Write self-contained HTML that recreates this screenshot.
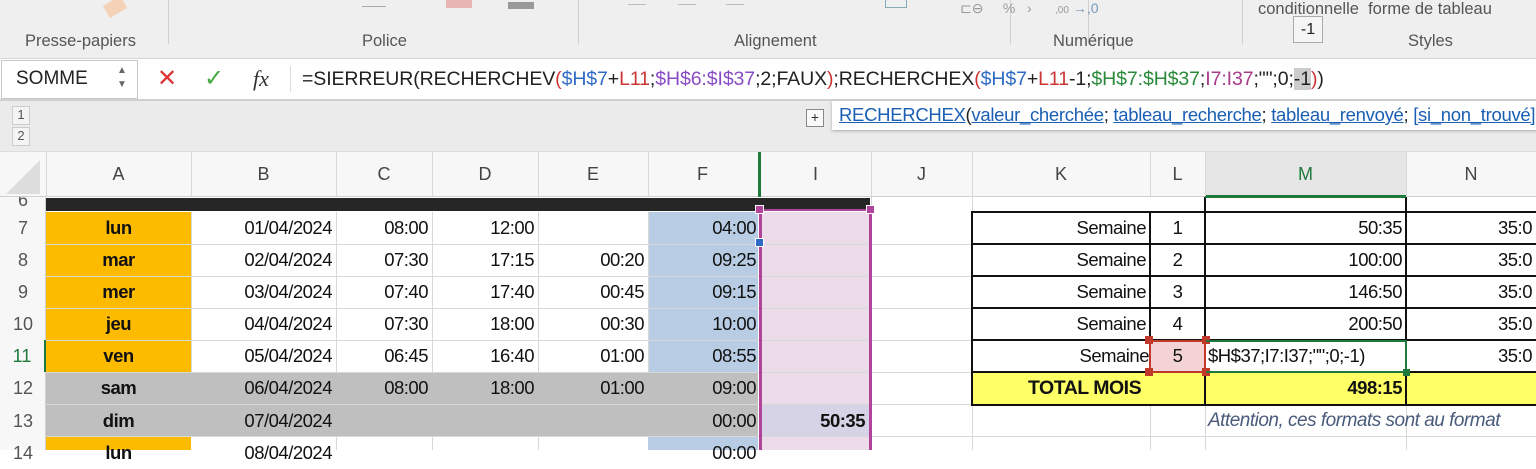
<!DOCTYPE html>
<html><head><meta charset="utf-8"><style>
*{margin:0;padding:0;box-sizing:border-box}
body{width:1536px;height:450px;overflow:hidden;background:#fff;position:relative;font-family:"Liberation Sans",sans-serif}
.a{position:absolute}
.c{position:absolute;font-size:18.5px;line-height:32px;white-space:nowrap;color:#111;letter-spacing:-0.5px}
.r{text-align:right;padding-right:4px}
.m{text-align:center}
.b{font-weight:bold}
.hl{position:absolute;height:1px;background:#d8d8d8}
.vl{position:absolute;width:1px;background:#d8d8d8}
.ch{position:absolute;top:152px;height:45px;line-height:45px;text-align:center;font-size:18px;color:#444}
.rh{position:absolute;left:0;width:46px;text-align:center;font-size:18px;color:#555;line-height:32px}
</style></head><body>
<!-- ribbon -->
<div class="a" style="left:0;top:0;width:1536px;height:58px;background:#efefef"></div>
<div class="a" style="left:168px;top:0;width:1px;height:44px;background:#d0d0d0"></div>
<div class="a" style="left:578px;top:0;width:1px;height:44px;background:#d0d0d0"></div>
<div class="a" style="left:1010px;top:0;width:1px;height:44px;background:#d0d0d0"></div>
<div class="a" style="left:1088px;top:0;width:1px;height:44px;background:#d0d0d0"></div>
<div class="a" style="left:1242px;top:0;width:1px;height:44px;background:#d0d0d0"></div>
<div class="a" style="left:105px;top:0;width:20px;height:14px;background:#f3d2b8;transform:rotate(-30deg)"></div>
<div class="a" style="left:446px;top:0;width:26px;height:8px;background:#e8b4b4"></div>
<div class="a" style="left:508px;top:2px;width:26px;height:7px;background:#999"></div>
<div class="a" style="left:362px;top:6px;width:24px;height:1px;background:#aaa"></div>
<div class="a" style="left:628px;top:4px;width:18px;height:1px;background:#bbb"></div>
<div class="a" style="left:678px;top:4px;width:18px;height:1px;background:#bbb"></div>
<div class="a" style="left:726px;top:4px;width:18px;height:1px;background:#bbb"></div>
<div class="a" style="left:885px;top:0;width:22px;height:8px;border:1px solid #8ab;border-top:none"></div>
<div class="a" style="left:960px;top:0;font-size:14px;color:#999">⊏⊖&nbsp;&nbsp;&nbsp;&nbsp;&nbsp;%&nbsp;&nbsp;&nbsp;›&nbsp;&nbsp;&nbsp;&nbsp;&nbsp;&nbsp;<span style="font-size:10px">,00</span> <span style="color:#79b">→,0</span></div>
<div class="a" style="left:1258px;top:0;font-size:16.5px;color:#555;line-height:18px">conditionnelle&nbsp;&nbsp;forme de tableau</div>
<div class="a" style="left:25px;top:32px;font-size:16.5px;color:#555">Presse-papiers</div>
<div class="a" style="left:362px;top:32px;font-size:16.5px;color:#555">Police</div>
<div class="a" style="left:734px;top:32px;font-size:16.5px;color:#555">Alignement</div>
<div class="a" style="left:1053px;top:32px;font-size:16.5px;color:#555">Numérique</div>
<div class="a" style="left:1408px;top:32px;font-size:16.5px;color:#555">Styles</div>
<div class="a" style="left:1293px;top:16px;width:30px;height:27px;border:1px solid #aaa;background:#f5f5f5;font-size:16px;line-height:25px;text-align:center;color:#222">-1</div>
<!-- formula bar -->
<div class="a" style="left:0;top:58px;width:1536px;height:43px;background:#fff;border-top:1px solid #d4d4d4;border-bottom:2px solid #d0d0d0"></div>
<div class="a" style="left:1px;top:60px;width:137px;height:39px;border:1px solid #c8c8c8;background:#fff"></div>
<div class="a" style="left:16px;top:64px;font-size:19px;line-height:30px;color:#222">SOMME</div>
<div class="a" style="left:117px;top:64px;font-size:10px;line-height:14px;color:#666">▲<br>▼</div>
<div class="a" style="left:157px;top:63px;font-size:24px;color:#d33;line-height:32px">✕</div>
<div class="a" style="left:204px;top:63px;font-size:24px;color:#4a4;line-height:32px">✓</div>
<div class="a" style="left:253px;top:63px;font-size:22px;font-family:'Liberation Serif',serif;font-style:italic;color:#333;line-height:32px">fx</div>
<div class="a" style="left:290px;top:66px;width:1px;height:26px;background:#ddd"></div>
<div class="a" style="left:302px;top:64px;font-size:19.5px;line-height:30px;color:#222;white-space:nowrap;letter-spacing:-0.1px">=SIERREUR(RECHERCHEV<span style="color:#c33">(</span><span style="color:#2f6bc4">$H$7</span>+<span style="color:#c33">L11</span>;<span style="color:#8a4cc4">$H$6:$I$37</span>;2;FAUX<span style="color:#c33">)</span>;RECHERCHEX<span style="color:#c33">(</span><span style="color:#2f6bc4">$H$7</span>+<span style="color:#c33">L11</span>-1;<span style="color:#2a8a3a">$H$7:$H$37</span>;<span style="color:#a83a8a">I7:I37</span>;"";0;<span style="background:#ccc">-1</span><span style="color:#c33">)</span>)</div>
<!-- outline area -->
<div class="a" style="left:0;top:101px;width:1536px;height:51px;background:#ebebeb"></div>
<div class="a" style="left:12px;top:106px;width:18px;height:19px;border:1px solid #ccc;background:#f4f4f4;font-size:13px;text-align:center;color:#555">1</div>
<div class="a" style="left:12px;top:127px;width:18px;height:19px;border:1px solid #ccc;background:#f4f4f4;font-size:13px;text-align:center;color:#555">2</div>
<div class="a" style="left:806px;top:109px;width:18px;height:18px;border:1px solid #888;background:#fafafa;font-size:14px;line-height:15px;text-align:center;color:#333">+</div>
<div class="a" style="left:832px;top:101px;width:710px;height:29px;background:#fff;box-shadow:0 1px 3px #aaa"></div>
<div class="a" style="left:839px;top:102px;font-size:18.5px;line-height:26px;color:#1a5fb4;white-space:nowrap;letter-spacing:-0.3px"><u>RECHERCHEX</u><span style="color:#222">(</span><u>valeur_cherchée</u><span style="color:#222">; </span><u>tableau_recherche</u><span style="color:#222">; </span><u>tableau_renvoyé</u><span style="color:#222">; </span><u>[si_non_trouvé]</u></div>
<!-- column headers -->
<div class="a" style="left:0;top:151px;width:1536px;height:46px;background:#f7f7f7;border-top:1px solid #ddd;border-bottom:1px solid #d0d0d0"></div>
<div class="a" style="left:6px;top:160px;width:0;height:0;border-left:34px solid transparent;border-bottom:34px solid #ddd"></div>
<div class="ch" style="left:46px;width:145px">A</div>
<div class="ch" style="left:191px;width:145px">B</div>
<div class="ch" style="left:336px;width:96px">C</div>
<div class="ch" style="left:432px;width:106px">D</div>
<div class="ch" style="left:538px;width:110px">E</div>
<div class="ch" style="left:648px;width:109px">F</div>
<div class="ch" style="left:760px;width:111px">I</div>
<div class="ch" style="left:871px;width:101px">J</div>
<div class="ch" style="left:972px;width:178px">K</div>
<div class="ch" style="left:1150px;width:55px">L</div>
<div class="ch" style="left:1205px;width:201px;color:#1e7a3c;background:#e6e6e6">M</div>
<div class="a" style="left:1205px;top:195px;width:201px;height:2px;background:#1e7a3c"></div>
<div class="ch" style="left:1406px;width:130px">N</div>
<div class="vl" style="left:46px;top:152px;height:45px"></div>
<div class="vl" style="left:191px;top:152px;height:45px"></div>
<div class="vl" style="left:336px;top:152px;height:45px"></div>
<div class="vl" style="left:432px;top:152px;height:45px"></div>
<div class="vl" style="left:538px;top:152px;height:45px"></div>
<div class="vl" style="left:648px;top:152px;height:45px"></div>
<div class="vl" style="left:871px;top:152px;height:45px"></div>
<div class="vl" style="left:972px;top:152px;height:45px"></div>
<div class="vl" style="left:1150px;top:152px;height:45px"></div>
<div class="vl" style="left:1205px;top:152px;height:45px"></div>
<div class="vl" style="left:1406px;top:152px;height:45px"></div>
<div class="a" style="left:758px;top:152px;width:3px;height:45px;background:#1e7a3c"></div>
<!-- grid area -->
<div class="a" style="left:0;top:197px;width:46px;height:253px;background:#f7f7f7;border-right:1px solid #d0d0d0"></div>
<div class="rh" style="top:197px;height:14px;overflow:hidden;line-height:6px">6</div>
<div class="rh" style="top:212px">7</div>
<div class="rh" style="top:244px">8</div>
<div class="rh" style="top:276px">9</div>
<div class="rh" style="top:308px">10</div>
<div class="rh" style="top:340px;color:#1e7a3c;border-right:2px solid #1e7a3c">11</div>
<div class="rh" style="top:372px">12</div>
<div class="rh" style="top:405px">13</div>
<div class="rh" style="top:437px">14</div>
<!-- row 6 dark bar -->
<div class="a" style="left:46px;top:198px;width:824px;height:13px;background:#262626"></div>
<!-- backgrounds -->
<div class="a" style="left:46px;top:212px;width:145px;height:160px;background:#fdbb00"></div>
<div class="a" style="left:46px;top:437px;width:145px;height:13px;background:#fdbb00"></div>
<div class="a" style="left:648px;top:212px;width:110px;height:160px;background:#b8cce4"></div>
<div class="a" style="left:648px;top:437px;width:110px;height:13px;background:#b8cce4"></div>
<div class="a" style="left:46px;top:372px;width:712px;height:65px;background:#bfbfbf"></div>
<div class="a" style="left:762px;top:212px;width:108px;height:238px;background:#ecdbe9"></div>
<div class="a" style="left:762px;top:405px;width:108px;height:32px;background:#d6d3e6"></div>
<!-- grid lines -->
<div class="hl" style="left:46px;top:244px;width:1490px"></div>
<div class="hl" style="left:46px;top:276px;width:1490px"></div>
<div class="hl" style="left:46px;top:308px;width:1490px"></div>
<div class="hl" style="left:46px;top:340px;width:1490px"></div>
<div class="hl" style="left:46px;top:372px;width:1490px"></div>
<div class="hl" style="left:46px;top:404px;width:1490px"></div>
<div class="hl" style="left:46px;top:436px;width:1490px"></div>
<div class="vl" style="left:336px;top:212px;height:160px"></div>
<div class="vl" style="left:432px;top:212px;height:160px"></div>
<div class="vl" style="left:538px;top:212px;height:160px"></div>
<div class="vl" style="left:648px;top:212px;height:160px"></div>
<div class="vl" style="left:191px;top:212px;height:160px"></div>
<div class="vl" style="left:336px;top:437px;height:13px"></div>
<div class="vl" style="left:432px;top:437px;height:13px"></div>
<div class="vl" style="left:538px;top:437px;height:13px"></div>
<div class="vl" style="left:871px;top:197px;height:253px"></div>
<div class="vl" style="left:972px;top:197px;height:253px"></div>
<div class="vl" style="left:1150px;top:405px;height:45px"></div>
<div class="vl" style="left:1205px;top:197px;height:253px"></div>
<div class="vl" style="left:1406px;top:197px;height:253px"></div>
<!-- I col selection border -->
<div class="a" style="left:759px;top:208px;width:3px;height:242px;background:#b0449a"></div>
<div class="a" style="left:869px;top:208px;width:3px;height:242px;background:#b0449a"></div>
<div class="a" style="left:759px;top:209px;width:113px;height:2px;background:#b0449a"></div>
<div class="a" style="left:755px;top:205px;width:9px;height:9px;background:#b0449a;border:1px solid #fff"></div>
<div class="a" style="left:866px;top:205px;width:9px;height:9px;background:#b0449a;border:1px solid #fff"></div>
<div class="a" style="left:755px;top:238px;width:9px;height:9px;background:#2f6bc4;border:1px solid #fff"></div>
<!-- data cells -->
<div class="c b m" style="left:46px;top:212px;width:145px">lun</div>
<div class="c b m" style="left:46px;top:244px;width:145px">mar</div>
<div class="c b m" style="left:46px;top:276px;width:145px">mer</div>
<div class="c b m" style="left:46px;top:308px;width:145px">jeu</div>
<div class="c b m" style="left:46px;top:340px;width:145px">ven</div>
<div class="c b m" style="left:46px;top:372px;width:145px">sam</div>
<div class="c b m" style="left:46px;top:405px;width:145px">dim</div>
<div class="c b m" style="left:46px;top:437px;width:145px">lun</div>
<div class="c r" style="left:191px;top:212px;width:145px">01/04/2024</div>
<div class="c r" style="left:191px;top:244px;width:145px">02/04/2024</div>
<div class="c r" style="left:191px;top:276px;width:145px">03/04/2024</div>
<div class="c r" style="left:191px;top:308px;width:145px">04/04/2024</div>
<div class="c r" style="left:191px;top:340px;width:145px">05/04/2024</div>
<div class="c r" style="left:191px;top:372px;width:145px">06/04/2024</div>
<div class="c r" style="left:191px;top:405px;width:145px">07/04/2024</div>
<div class="c r" style="left:191px;top:437px;width:145px">08/04/2024</div>
<div class="c r" style="left:336px;top:212px;width:96px">08:00</div>
<div class="c r" style="left:336px;top:244px;width:96px">07:30</div>
<div class="c r" style="left:336px;top:276px;width:96px">07:40</div>
<div class="c r" style="left:336px;top:308px;width:96px">07:30</div>
<div class="c r" style="left:336px;top:340px;width:96px">06:45</div>
<div class="c r" style="left:336px;top:372px;width:96px">08:00</div>
<div class="c r" style="left:432px;top:212px;width:106px">12:00</div>
<div class="c r" style="left:432px;top:244px;width:106px">17:15</div>
<div class="c r" style="left:432px;top:276px;width:106px">17:40</div>
<div class="c r" style="left:432px;top:308px;width:106px">18:00</div>
<div class="c r" style="left:432px;top:340px;width:106px">16:40</div>
<div class="c r" style="left:432px;top:372px;width:106px">18:00</div>
<div class="c r" style="left:538px;top:244px;width:110px">00:20</div>
<div class="c r" style="left:538px;top:276px;width:110px">00:45</div>
<div class="c r" style="left:538px;top:308px;width:110px">00:30</div>
<div class="c r" style="left:538px;top:340px;width:110px">01:00</div>
<div class="c r" style="left:538px;top:372px;width:110px">01:00</div>
<div class="c r" style="left:648px;top:212px;width:110px;padding-right:2px">04:00</div>
<div class="c r" style="left:648px;top:244px;width:110px;padding-right:2px">09:25</div>
<div class="c r" style="left:648px;top:276px;width:110px;padding-right:2px">09:15</div>
<div class="c r" style="left:648px;top:308px;width:110px;padding-right:2px">10:00</div>
<div class="c r" style="left:648px;top:340px;width:110px;padding-right:2px">08:55</div>
<div class="c r" style="left:648px;top:372px;width:110px;padding-right:2px">09:00</div>
<div class="c r" style="left:648px;top:405px;width:110px;padding-right:2px">00:00</div>
<div class="c r" style="left:648px;top:437px;width:110px;padding-right:2px">00:00</div>
<div class="c r b" style="left:760px;top:405px;width:109px">50:35</div>
<!-- right table -->
<div class="a" style="left:972px;top:372px;width:564px;height:33px;background:#ffff66"></div>
<div class="a" style="left:1150px;top:340px;width:55px;height:32px;background:#f3d3d3"></div>
<div class="a" style="left:971px;top:211px;width:2px;height:195px;background:#111"></div>
<div class="a" style="left:1149px;top:211px;width:2px;height:162px;background:#111"></div>
<div class="a" style="left:1204px;top:197px;width:2px;height:209px;background:#111"></div>
<div class="a" style="left:1405px;top:197px;width:2px;height:209px;background:#111"></div>
<div class="a" style="left:971px;top:211px;width:565px;height:2px;background:#111"></div>
<div class="a" style="left:971px;top:243px;width:565px;height:2px;background:#111"></div>
<div class="a" style="left:971px;top:275px;width:565px;height:2px;background:#111"></div>
<div class="a" style="left:971px;top:307px;width:565px;height:2px;background:#111"></div>
<div class="a" style="left:971px;top:339px;width:565px;height:2px;background:#111"></div>
<div class="a" style="left:971px;top:371px;width:565px;height:2px;background:#111"></div>
<div class="a" style="left:971px;top:404px;width:565px;height:2px;background:#111"></div>
<div class="a" style="left:1205px;top:196px;width:201px;height:2px;background:#1e7a3c"></div>
<div class="c r" style="left:972px;top:212px;width:178px">Semaine</div>
<div class="c r" style="left:972px;top:244px;width:178px">Semaine</div>
<div class="c r" style="left:972px;top:276px;width:178px">Semaine</div>
<div class="c r" style="left:972px;top:308px;width:178px">Semaine</div>
<div class="c r" style="left:972px;top:340px;width:178px;padding-right:1px">Semaine</div>
<div class="c m" style="left:1150px;top:212px;width:55px">1</div>
<div class="c m" style="left:1150px;top:244px;width:55px">2</div>
<div class="c m" style="left:1150px;top:276px;width:55px">3</div>
<div class="c m" style="left:1150px;top:308px;width:55px">4</div>
<div class="c m" style="left:1150px;top:340px;width:55px">5</div>
<div class="c r" style="left:1205px;top:212px;width:201px">50:35</div>
<div class="c r" style="left:1205px;top:244px;width:201px">100:00</div>
<div class="c r" style="left:1205px;top:276px;width:201px">146:50</div>
<div class="c r" style="left:1205px;top:308px;width:201px">200:50</div>
<div class="c" style="left:1208px;top:340px;width:198px">$H$37;I7:I37;"";0;-1)</div>
<div class="c r" style="left:1406px;top:212px;width:140px;padding-right:14px">35:0</div>
<div class="c r" style="left:1406px;top:244px;width:140px;padding-right:14px">35:0</div>
<div class="c r" style="left:1406px;top:276px;width:140px;padding-right:14px">35:0</div>
<div class="c r" style="left:1406px;top:308px;width:140px;padding-right:14px">35:0</div>
<div class="c r" style="left:1406px;top:340px;width:140px;padding-right:14px">35:0</div>
<div class="c b" style="left:1028px;top:372px;font-size:19.5px">TOTAL MOIS</div>
<div class="c b r" style="left:1205px;top:372px;width:201px">498:15</div>
<div class="c" style="left:1208px;top:405px;font-style:italic;color:#4a5a7a;font-size:19px">Attention, ces formats sont au format</div>
<!-- L11 selection -->
<div class="a" style="left:1149px;top:340px;width:57px;height:33px;border:2px solid #c0392b"></div>
<div class="a" style="left:1145px;top:336px;width:8px;height:8px;background:#c0392b"></div>
<div class="a" style="left:1202px;top:336px;width:8px;height:8px;background:#c0392b"></div>
<div class="a" style="left:1145px;top:368px;width:8px;height:8px;background:#c0392b"></div>
<div class="a" style="left:1202px;top:368px;width:8px;height:8px;background:#c0392b"></div>
<div class="a" style="left:1206px;top:340px;width:201px;height:33px;border:2px solid #1e7a3c;border-left:none"></div>
<div class="a" style="left:1403px;top:369px;width:7px;height:7px;background:#1e7a3c"></div>
</body></html>
